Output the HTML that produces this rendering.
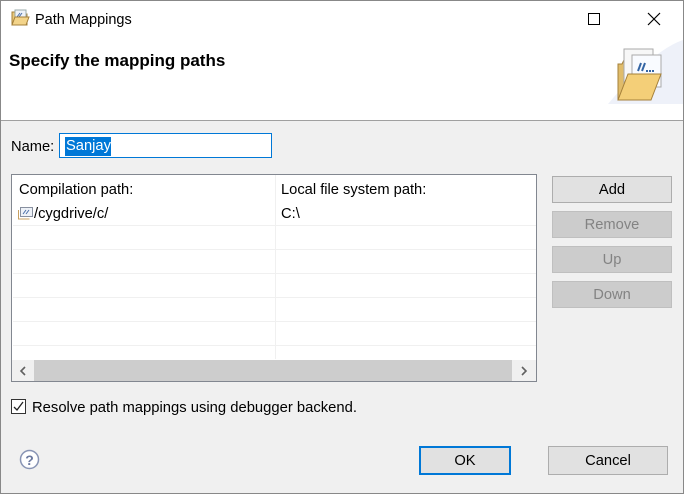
<!DOCTYPE html>
<html><head><style>
*{box-sizing:border-box;margin:0;padding:0}
body{width:684px;height:494px;position:relative;font-family:"Liberation Sans",sans-serif;font-size:14.7px;color:#000;background:#f0f0f0;overflow:hidden}
.a{position:absolute}
.win{left:0;top:0;width:684px;height:494px;border:1px solid #888;}
.btn{position:absolute;background:#e1e1e1;border:1px solid #adadad;text-align:center;font-size:14.7px;}
.dis{background:#cccccc;border-color:#bfbfbf;color:#838383}
.row{position:absolute;left:1px;width:523px;height:1px;background:#f0f0f0}
</style></head><body>
<div class="a" style="left:0;top:0;width:684px;height:121px;background:#fff;border-bottom:1px solid #a0a0a0"></div>
<div class="a win"></div>
<svg class="a" style="left:10px;top:9px" width="20" height="18" viewBox="0 0 20 18">
<path d="M2 3h5l1 2h9v11H2z" fill="#e8c77a" stroke="#a5803a"/>
<rect x="5" y="1" width="11" height="9" fill="#eef2f8" stroke="#9aa"/>
<path d="M7 8l3-4M9 8l3-4" stroke="#4a6ea8"/>
<path d="M2 16l3-8h14l-3 8z" fill="#f3d48a" stroke="#a5803a"/>
</svg>
<div class="a" style="left:35px;top:12px;font-size:14.5px">Path Mappings</div>
<div class="a" style="left:588px;top:13px;width:12px;height:12px;border:1px solid #000"></div>
<svg class="a" style="left:647px;top:12px" width="14" height="14"><path d="M1 1L13 13M13 1L1 13" stroke="#000" stroke-width="1.2"/></svg>
<div class="a" style="left:9px;top:51px;font-weight:bold;font-size:17px">Specify the mapping paths</div>
<svg class="a" style="left:608px;top:36px" width="75" height="68" viewBox="0 0 75 68">
<path d="M75 4 Q45 14 0 68 H75z" fill="#eef1f9"/>
<path d="M10 28h4l2-4h16v40H10z" fill="#e0bc6a" stroke="#a5803a"/>
<rect x="16" y="13" width="29" height="36" fill="#f7f7f7" stroke="#aaa"/>
<rect x="24" y="19" width="29" height="32" fill="#f9fbff" stroke="#aaa"/>
<path d="M30 35l3-8M34 35l3-8" stroke="#3465a4" stroke-width="2"/><path d="M38 35h8" stroke="#3465a4" stroke-width="2" stroke-dasharray="2 1"/>
<path d="M10 64l10-26h33l-10 26z" fill="#f4cf78" stroke="#a5803a"/>
</svg>
<div class="a" style="left:11px;top:139px">Name:</div>
<div class="a" style="left:59px;top:133px;width:213px;height:25px;background:#fff;border:1px solid #0078d7"></div>
<div class="a" style="left:65px;top:137px;width:46px;height:19px;background:#0078d7;color:#fff;padding:1px 0 0 1px">Sanjay</div>
<div class="a" style="left:11px;top:174px;width:526px;height:208px;background:#fff;border:1px solid #828790">
<div class="a" style="left:263px;top:0;width:1px;height:184px;background:#f0f0f0"></div>
<div class="row" style="top:50px"></div><div class="row" style="top:74px"></div><div class="row" style="top:98px"></div><div class="row" style="top:122px"></div><div class="row" style="top:146px"></div><div class="row" style="top:170px"></div>
<div class="a" style="left:7px;top:7px">Compilation path:</div>
<div class="a" style="left:269px;top:7px">Local file system path:</div>
<svg class="a" style="left:6px;top:32px" width="16" height="14"><rect x="2.5" y=".5" width="12" height="9" fill="#eef2f8" stroke="#8890a0"/><path d="M5 7l3-4M8 7l3-4" stroke="#4a6ea8"/><path d="M.5 3v9h11" fill="none" stroke="#c8a060"/></svg>
<div class="a" style="left:22px;top:31px">/cygdrive/c/</div>
<div class="a" style="left:269px;top:31px">C:\</div>
<div class="a" style="left:0;top:185px;width:524px;height:21px;background:#f0f0f0"></div>
<div class="a" style="left:22px;top:185px;width:478px;height:21px;background:#cdcdcd"></div>
<svg class="a" style="left:6px;top:190px" width="10" height="12"><path d="M7 2L3 6l4 4" fill="none" stroke="#606060" stroke-width="1.6"/></svg>
<svg class="a" style="left:507px;top:190px" width="10" height="12"><path d="M3 2l4 4-4 4" fill="none" stroke="#606060" stroke-width="1.6"/></svg>
</div>
<div class="btn" style="left:552px;top:176px;width:120px;height:27px;line-height:27px">Add</div>
<div class="btn dis" style="left:552px;top:211px;width:120px;height:27px;line-height:27px">Remove</div>
<div class="btn dis" style="left:552px;top:246px;width:120px;height:27px;line-height:27px">Up</div>
<div class="btn dis" style="left:552px;top:281px;width:120px;height:27px;line-height:27px">Down</div>
<div class="a" style="left:11px;top:399px;width:15px;height:15px;border:1px solid #333;background:#fff"></div>
<svg class="a" style="left:12px;top:400px" width="13" height="13"><path d="M2 7l3 3 6-8" fill="none" stroke="#222" stroke-width="1.3"/></svg>
<div class="a" style="left:32px;top:400px;font-size:14.8px">Resolve path mappings using debugger backend.</div>
<svg class="a" style="left:19px;top:449px" width="21" height="21"><circle cx="10.5" cy="10.5" r="9" fill="#fff" stroke="#8894b4" stroke-width="1.5"/><text x="10.5" y="16" text-anchor="middle" font-family="Liberation Sans" font-size="14" font-weight="bold" fill="#6c7aa0">?</text></svg>
<div class="btn" style="left:419px;top:446px;width:92px;height:29px;line-height:27px;border:2px solid #0078d7">OK</div>
<div class="btn" style="left:548px;top:446px;width:120px;height:29px;line-height:29px">Cancel</div>
</body></html>
